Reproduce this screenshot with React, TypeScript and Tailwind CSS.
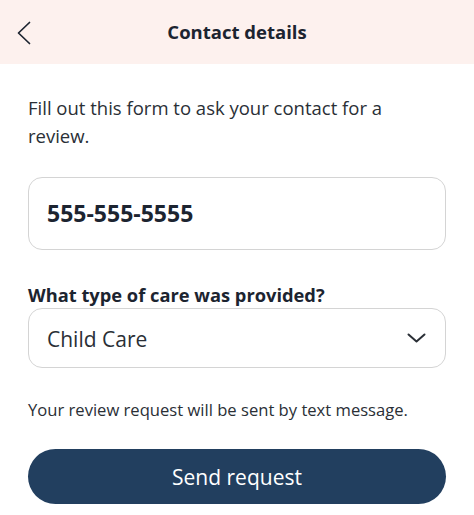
export default function App() {
  return (
    <div className="min-h-screen bg-white text-[#1c2430]" style={{ fontFamily: "'Open Sans', Lato, sans-serif" }}>
      {/* Header */}
      <div className="relative flex h-[64px] items-center justify-center bg-[#fdf1ee]">
        <button className="absolute left-[17px] top-[21px] text-[#1c2430]">
          <svg width="14" height="24" viewBox="0 0 14 24" fill="none" stroke="currentColor" strokeWidth="1.7" strokeLinecap="round" strokeLinejoin="round">
            <polyline points="12.5,1.5 1.5,12 12.5,22.5" />
          </svg>
        </button>
        <h1 className="text-[18.5px] font-bold">Contact details</h1>
      </div>

      <div className="px-[28px]">
        <p className="mt-[30px] pr-[8px] text-[18.5px] leading-[28px] text-[#2a2f36]">
          Fill out this form to ask your contact for a review.
        </p>

        <div className="mt-[27px] flex h-[73px] items-center rounded-[14px] border border-[#d4d4d4] px-[18px]">
          <span className="text-[23px] font-bold text-[#1c2430]">555-555-5555</span>
        </div>

        <p className="mt-[33px] text-[18.3px] font-bold leading-[24px]">What type of care was provided?</p>

        <div className="mt-[1px] flex h-[60px] items-center justify-between rounded-[14px] border border-[#d4d4d4] pl-[18px] pr-[19px]">
          <span className="pt-[4px] text-[21px] text-[#2a2f36]">Child Care</span>
          <svg width="19" height="10" viewBox="0 0 19 10" fill="none" stroke="#2a2f36" strokeWidth="2" strokeLinecap="round" strokeLinejoin="round">
            <polyline points="1.5,1.5 9.5,8.5 17.5,1.5" />
          </svg>
        </div>

        <p className="mt-[31px] text-[16.6px] leading-[22px] text-[#2a2f36]">
          Your review request will be sent by text message.
        </p>

        <button className="mt-[28px] flex h-[55px] w-full items-center justify-center rounded-full bg-[#223f5f] pt-[3px] text-[21px] text-white">
          Send request
        </button>
      </div>
    </div>
  );
}
